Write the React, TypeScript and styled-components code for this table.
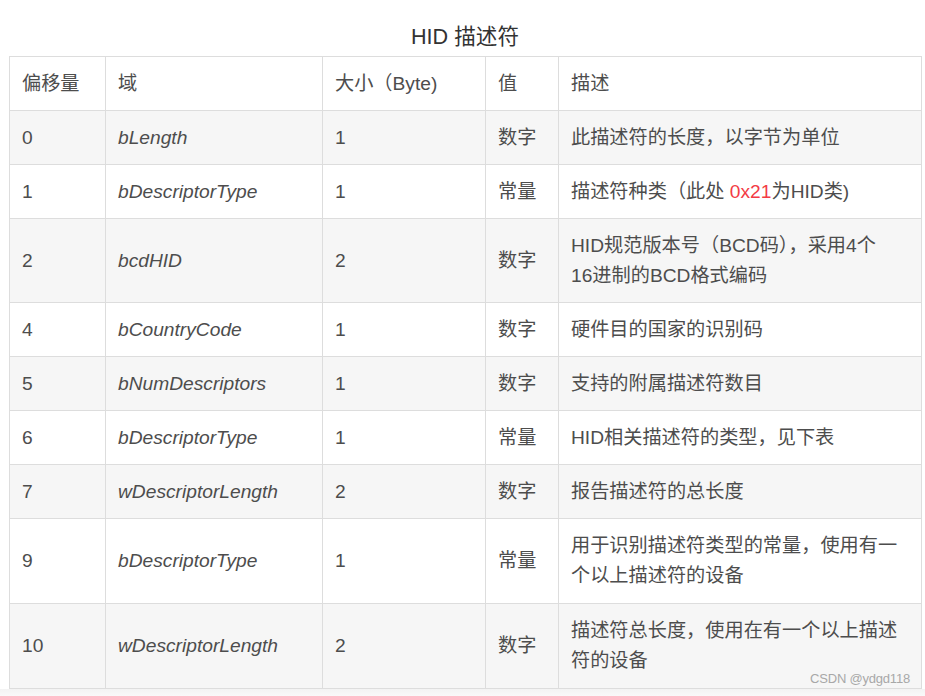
import React from "react";
import styled, { createGlobalStyle } from "styled-components";

const Global = createGlobalStyle`
  html, body { margin: 0; padding: 0; background: #fff; }
  body {
    font-family: "Liberation Sans", Arial, "Noto Sans CJK SC", sans-serif;
    color: #4d4d4d;
  }
`;

const Page = styled.div`
  width: 925px;
  height: 696px;
  overflow: hidden;
  display: flex;
  flex-direction: column;
  background: #fff;
`;

const Title = styled.div`
  height: 56px;
  display: flex;
  align-items: flex-end;
  justify-content: center;
  padding-left: 9px;
  padding-right: 4px;
  box-sizing: border-box;
  font-size: 21.6px;
  line-height: 22px;
  padding-bottom: 8px;
  color: #333;
`;

const TableWrap = styled.div`
  position: relative;
  padding-left: 9px;
`;

const Table = styled.table`
  width: 912px;
  border-collapse: collapse;
  table-layout: fixed;
  font-size: 19.2px;
  line-height: 30px;
  color: #4d4d4d;
`;

const Row = styled.tr<{ $striped?: boolean }>`
  background: ${(p) => (p.$striped ? "#f6f6f6" : "#fff")};
`;

const Cell = styled.td<{ $h: number; $italic?: boolean }>`
  border: 1px solid #dddddd;
  padding: 0 12px;
  height: ${(p) => p.$h}px;
  box-sizing: border-box;
  vertical-align: middle;
  font-style: ${(p) => (p.$italic ? "italic" : "normal")};
  white-space: nowrap;
`;

const Red = styled.span`
  color: #f33b45;
`;

const Watermark = styled.div`
  position: absolute;
  right: 15px;
  bottom: 3px;
  font-family: "Liberation Sans", Arial, sans-serif;
  font-size: 13px;
  letter-spacing: -0.2px;
  color: #a8a8a8;
  line-height: 14px;
`;

const BottomStrip = styled.div`
  flex: 1;
  background: linear-gradient(#f3f3f3, #f9f9f9);
`;

type R = {
  off: string;
  field: string;
  size: string;
  val: string;
  desc: React.ReactNode;
  h: number;
};

const rows: R[] = [
  { off: "0", field: "bLength", size: "1", val: "数字", desc: "此描述符的长度，以字节为单位", h: 54 },
  {
    off: "1",
    field: "bDescriptorType",
    size: "1",
    val: "常量",
    desc: (
      <>
        描述符种类（此处 <Red>0x21</Red>为HID类)
      </>
    ),
    h: 54,
  },
  {
    off: "2",
    field: "bcdHID",
    size: "2",
    val: "数字",
    desc: (
      <>
        HID规范版本号（BCD码），采用4个
        <br />
        16进制的BCD格式编码
      </>
    ),
    h: 84,
  },
  { off: "4", field: "bCountryCode", size: "1", val: "数字", desc: "硬件目的国家的识别码", h: 54 },
  { off: "5", field: "bNumDescriptors", size: "1", val: "数字", desc: "支持的附属描述符数目", h: 54 },
  { off: "6", field: "bDescriptorType", size: "1", val: "常量", desc: "HID相关描述符的类型，见下表", h: 54 },
  { off: "7", field: "wDescriptorLength", size: "2", val: "数字", desc: "报告描述符的总长度", h: 54 },
  {
    off: "9",
    field: "bDescriptorType",
    size: "1",
    val: "常量",
    desc: (
      <>
        用于识别描述符类型的常量，使用有一
        <br />
        个以上描述符的设备
      </>
    ),
    h: 85,
  },
  {
    off: "10",
    field: "wDescriptorLength",
    size: "2",
    val: "数字",
    desc: (
      <>
        描述符总长度，使用在有一个以上描述
        <br />
        符的设备
      </>
    ),
    h: 85,
  },
];

export default function App() {
  return (
    <Page>
      <Global />
      <Title>HID 描述符</Title>
      <TableWrap>
        <Table>
          <colgroup>
            <col style={{ width: 96 }} />
            <col style={{ width: 217 }} />
            <col style={{ width: 163 }} />
            <col style={{ width: 73 }} />
            <col style={{ width: 363 }} />
          </colgroup>
          <tbody>
            <Row>
              <Cell $h={54}>偏移量</Cell>
              <Cell $h={54}>域</Cell>
              <Cell $h={54}>大小（Byte)</Cell>
              <Cell $h={54}>值</Cell>
              <Cell $h={54}>描述</Cell>
            </Row>
            {rows.map((r, i) => (
              <Row key={i} $striped={i % 2 === 0}>
                <Cell $h={r.h}>{r.off}</Cell>
                <Cell $h={r.h} $italic>
                  {r.field}
                </Cell>
                <Cell $h={r.h}>{r.size}</Cell>
                <Cell $h={r.h}>{r.val}</Cell>
                <Cell $h={r.h}>{r.desc}</Cell>
              </Row>
            ))}
          </tbody>
        </Table>
        <Watermark>CSDN @ydgd118</Watermark>
      </TableWrap>
      <BottomStrip />
    </Page>
  );
}
